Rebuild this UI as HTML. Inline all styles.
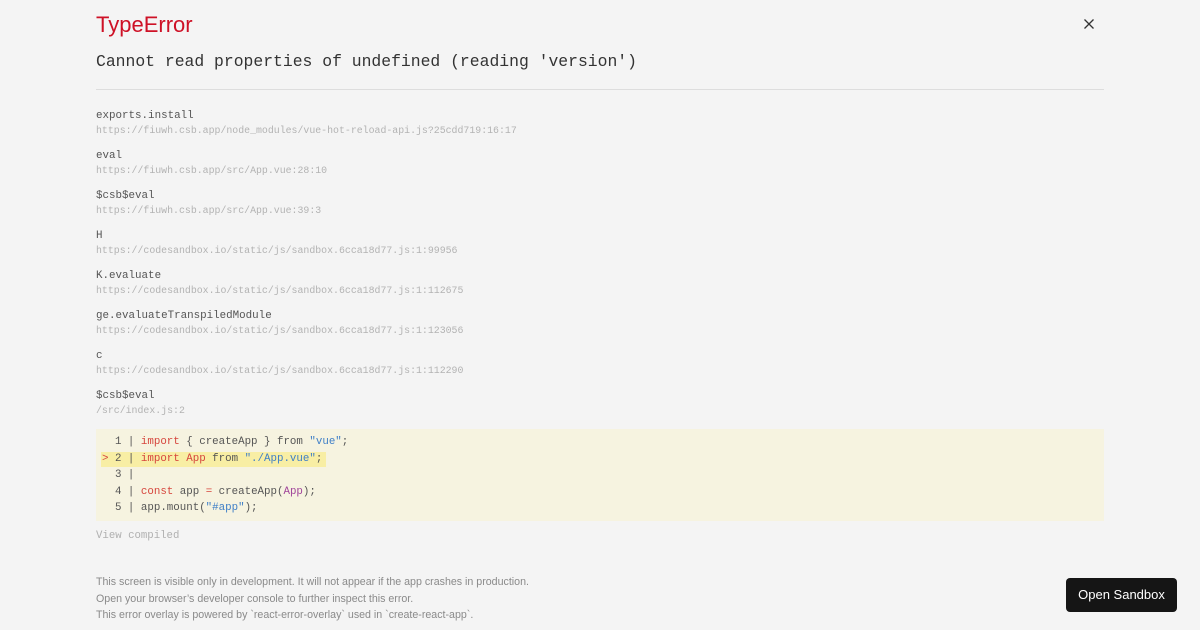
<!DOCTYPE html>
<html><head><meta charset="utf-8"><style>
html,body{margin:0;padding:0;width:1200px;height:630px;background:#f4f4f4;overflow:hidden;position:relative}
.a{position:absolute;white-space:pre;line-height:14px}
.m{font-family:"Liberation Mono",monospace}
.s{font-family:"Liberation Sans",sans-serif}
.n{font-size:10.85px;color:#555}
.u{font-size:9.9px;color:#b3b3b3}
.c{font-size:10.8px;color:#555}
.k{color:#d6453d}.str{color:#3f7fc7}.p{color:#a0449a}
</style></head><body>
<div class="a s" style="left:96px;top:12px;font-size:22px;line-height:26px;color:#ce1126">TypeError</div>
<svg style="position:absolute;left:1083px;top:18px" width="12" height="12" viewBox="0 0 12 12"><path d="M1.5 1.5L10.5 10.5M10.5 1.5L1.5 10.5" stroke="#333" stroke-width="1.3"/></svg>
<div class="a m" style="left:96px;top:52px;font-size:16.4px;line-height:20px;color:#333">Cannot read properties of undefined (reading 'version')</div>
<div style="position:absolute;left:96px;top:89px;width:1008px;height:1px;background:#ddd"></div>

<div class="a m n" style="left:96px;top:109px">exports.install</div>
<div class="a m u" style="left:96px;top:124px">https://fiuwh.csb.app/node_modules/vue-hot-reload-api.js?25cdd719:16:17</div>
<div class="a m n" style="left:96px;top:149px">eval</div>
<div class="a m u" style="left:96px;top:164px">https://fiuwh.csb.app/src/App.vue:28:10</div>
<div class="a m n" style="left:96px;top:189px">$csb$eval</div>
<div class="a m u" style="left:96px;top:204px">https://fiuwh.csb.app/src/App.vue:39:3</div>
<div class="a m n" style="left:96px;top:229px">H</div>
<div class="a m u" style="left:96px;top:244px">https://codesandbox.io/static/js/sandbox.6cca18d77.js:1:99956</div>
<div class="a m n" style="left:96px;top:269px">K.evaluate</div>
<div class="a m u" style="left:96px;top:284px">https://codesandbox.io/static/js/sandbox.6cca18d77.js:1:112675</div>
<div class="a m n" style="left:96px;top:309px">ge.evaluateTranspiledModule</div>
<div class="a m u" style="left:96px;top:324px">https://codesandbox.io/static/js/sandbox.6cca18d77.js:1:123056</div>
<div class="a m n" style="left:96px;top:349px">c</div>
<div class="a m u" style="left:96px;top:364px">https://codesandbox.io/static/js/sandbox.6cca18d77.js:1:112290</div>
<div class="a m n" style="left:96px;top:389px">$csb$eval</div>
<div class="a m u" style="left:96px;top:404px">/src/index.js:2</div>

<div style="position:absolute;left:96px;top:429px;width:1008px;height:92px;background:#f6f3e0"></div>
<div style="position:absolute;left:101px;top:452px;width:225px;height:15px;background:#f8eea4"></div>
<div class="a m c" style="left:102px;top:435px">  1 | <span class="k">import</span> { createApp } from <span class="str">"vue"</span>;</div>
<div class="a m c" style="left:102px;top:452px"><span class="k">&gt;</span> 2 | <span class="k">import App</span> from <span class="str">"./App.vue"</span>;</div>
<div class="a m c" style="left:102px;top:468px">  3 |</div>
<div class="a m c" style="left:102px;top:485px">  4 | <span class="k">const</span> app <span class="k">=</span> createApp(<span class="p">App</span>);</div>
<div class="a m c" style="left:102px;top:501px">  5 | app.mount(<span class="str">"#app"</span>);</div>
<div class="a m" style="left:96px;top:529px;font-size:10.7px;color:#b0b0b0">View compiled</div>

<div class="a s" style="left:96px;top:574px;font-size:10.65px;line-height:16.5px;color:#8a8a8a">This screen is visible only in development. It will not appear if the app crashes in production.
Open your browser’s developer console to further inspect this error.
This error overlay is powered by `react-error-overlay` used in `create-react-app`.</div>

<div class="s" style="position:absolute;left:1066px;top:578px;width:111px;height:34px;background:#151515;border-radius:4px;color:#fff;font-size:13px;line-height:34px;text-align:center">Open Sandbox</div>
</body></html>
